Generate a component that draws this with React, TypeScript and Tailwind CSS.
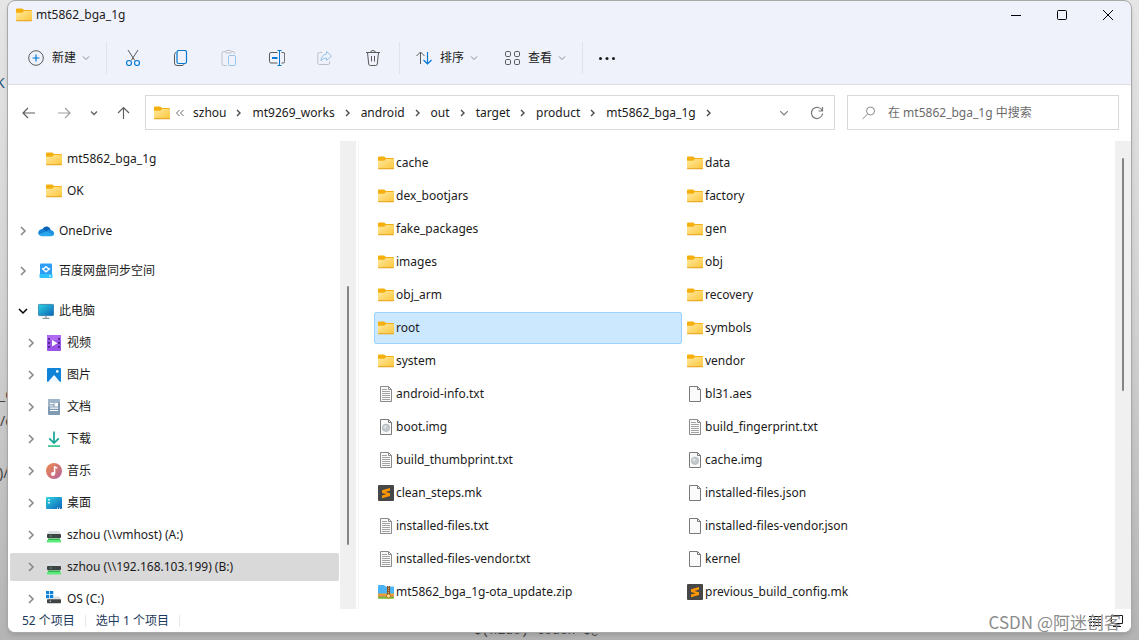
import React from 'react'

type IconProps = { className?: string }

const FolderIcon = ({ className = 'size-4 shrink-0' }: IconProps) => (
  <svg viewBox="0 0 16 16" className={className}>
    <defs>
      <linearGradient id="folder" x1="0" y1="0" x2="1" y2="1">
        <stop offset="0" stopColor="#ffe9a0" />
        <stop offset="1" stopColor="#fcc63a" />
      </linearGradient>
    </defs>
    <path d="M0 2.6Q0 1.5 1 1.5h5.2L8 3h7q1 0 1 1v4H0z" fill="#f5b00f" />
    <path d="M0 5.8h6.2L8 4h8v9.2q0 .8-.8.8H.8q-.8 0-.8-.8z" fill="url(#folder)" />
    <path d="M0 13.2h16q0 1-.8 1H.8q-.8 0-.8-1z" fill="#e5a01c" />
  </svg>
)

const page = 'M2.5.5h8l3 3v12h-11z'

const TextFileIcon = () => (
  <svg viewBox="0 0 16 16" className="size-4 shrink-0">
    <path d={page} fill="#fafafa" stroke="#8a8a8a" />
    <path d="M10.5.5v3h3" fill="none" stroke="#8a8a8a" />
    <path d="M4 3.5h5M4 5.5h8M4 7.5h8M4 9.5h8M4 11.5h8M4 13.5h8" stroke="#a3a3a3" />
  </svg>
)

const BlankFileIcon = () => (
  <svg viewBox="0 0 16 16" className="size-4 shrink-0">
    <path d={page} fill="#fafafa" stroke="#7a7a7a" />
    <path d="M10.5.5v3h3" fill="none" stroke="#7a7a7a" />
  </svg>
)

const DiscFileIcon = () => (
  <svg viewBox="0 0 16 16" className="size-4 shrink-0">
    <path d={page} fill="#fafafa" stroke="#7a7a7a" />
    <path d="M10.5.5v3h3" fill="none" stroke="#7a7a7a" />
    <circle cx="8" cy="8.8" r="3.7" fill="#c3c9cc" stroke="#a4abaf" strokeWidth=".6" />
    <circle cx="7" cy="7.8" r="1.6" fill="#dde2e4" />
  </svg>
)

const SublimeIcon = () => (
  <svg viewBox="0 0 16 16" className="size-4 shrink-0">
    <rect width="16" height="16" rx="1" fill="#474747" />
    <path d="M4 5.3L12 3v2.6L7.5 7 12 8.3v2.6L4 13.2v-2.6l4.6-1.3L4 7.9z" fill="#ff9800" />
  </svg>
)

const ZipIcon = () => (
  <svg viewBox="0 0 16 16" className="size-4 shrink-0">
    <path d="M0 2q0-1 1-1h5l1.5 1.5H15q1 0 1 1V11H0z" fill="#4cb4f5" />
    <path d="M0 9.6h16v2H0z" fill="#f3a51c" />
    <path d="M0 11.6h16v1H0z" fill="#d9342b" />
    <path d="M0 12.4h16V14q0 .8-1 .8H1q-1 0-1-.8z" fill="#7cb62c" />
    <path d="M9 2h3v9H9z" fill="#8a5526" />
    <path d="M10.5 2v9" stroke="#e0b070" strokeDasharray="1 1" />
    <circle cx="10.5" cy="12" r="2" fill="#ffe29a" stroke="#a86a14" strokeWidth=".8" />
  </svg>
)

const CloudIcon = () => (
  <svg viewBox="0 0 16 16" className="size-4 shrink-0">
    <path d="M5 5.2A4.3 4.3 0 0 1 12.7 7L9 11 3 9z" fill="#0a63b5" />
    <path d="M3.3 6.2A3.7 3.7 0 0 0 1 12l7-3.2-2.2-2.2q-1.2-.8-2.5-.4z" fill="#1381d8" />
    <path d="M1 12q1.2 1.3 3 1.3h8.8q2.2 0 3-1.6L8.5 8z" fill="#29a7ec" />
    <path d="M8.3 8.2q2-1.9 4.4-1.3 3.3.7 3.3 3.4 0 1-.6 1.9z" fill="#1c8fdf" />
  </svg>
)

const BaiduIcon = () => (
  <svg viewBox="0 0 16 16" className="size-4 shrink-0">
    <rect x="2" y=".5" width="12" height="12" rx="1" fill="#2d9df5" />
    <path d="M1.5 11h13v3q0 1-1 1h-11q-1 0-1-1z" fill="#2fc3f8" />
    <path d="M5 6.2L8 3.6l3 2.6L8 8.8zM4.2 5.2l1.3 1.3M11.8 5.2l-1.3 1.3" fill="none" stroke="#fff" strokeWidth="1.4" />
    <path d="M11 13h2" stroke="#fff" />
  </svg>
)

const PcIcon = () => (
  <svg viewBox="0 0 16 16" className="size-4 shrink-0">
    <defs>
      <linearGradient id="screen" x1="0" y1="0" x2="1" y2="1">
        <stop offset="0" stopColor="#2fd3e0" />
        <stop offset="1" stopColor="#0b62b8" />
      </linearGradient>
    </defs>
    <rect x=".4" y="1.4" width="15.2" height="11.2" rx=".8" fill="url(#screen)" stroke="#1b6f9c" strokeWidth=".7" />
    <path d="M8 13v2M4.5 15.3h7" stroke="#8e979d" strokeWidth="1.2" />
  </svg>
)

const VideoIcon = () => (
  <svg viewBox="0 0 16 16" className="size-4 shrink-0">
    <rect x="1" y="0" width="14" height="16" rx="1" fill="#9a52e8" />
    <path d="M1 0h14v5H1z" fill="#b06af2" />
    <path d="M3 3v11M13 3v11" stroke="#43207d" strokeWidth="1.8" strokeDasharray="1.8 2.2" />
    <path d="M6 4.8v6.8L11.5 8.2z" fill="#fff" />
  </svg>
)

const PictureIcon = () => (
  <svg viewBox="0 0 16 16" className="size-4 shrink-0">
    <rect x="1" y="1" width="14" height="14" rx="1" fill="#0f83d8" />
    <path d="M2 15l5.6-6.6q.5-.5 1 0L14 15z" fill="#f2f9ff" />
    <circle cx="11.3" cy="4.4" r="1.3" fill="#fff" />
  </svg>
)

const DocumentIcon = () => (
  <svg viewBox="0 0 16 16" className="size-4 shrink-0">
    <rect x="2" y="0" width="12" height="16" rx="1" fill="#7f9ab3" />
    <path d="M2 1q0-1 1-1h10q1 0 1 1v2L2 8z" fill="#9fb5c9" />
    <path d="M4 4.5h3.5M4 7h3.5M4 9.2h8M4 11.5h8" stroke="#fff" strokeWidth="1.2" />
    <rect x="8.5" y="4" width="3.5" height="3.5" fill="#fff" />
  </svg>
)

const DownloadIcon = () => (
  <svg viewBox="0 0 16 16" className="size-4 shrink-0">
    <path d="M8 .5V12M3.2 7.3L8 12l4.8-4.7" fill="none" stroke="#16a796" strokeWidth="1.7" />
    <path d="M2 15.1h12" stroke="#2cc08a" strokeWidth="1.6" />
  </svg>
)

const MusicIcon = () => (
  <svg viewBox="0 0 16 16" className="size-4 shrink-0">
    <defs>
      <linearGradient id="music" x1="0" y1="0" x2="1" y2="1">
        <stop offset="0" stopColor="#f0894a" />
        <stop offset="1" stopColor="#b2619f" />
      </linearGradient>
    </defs>
    <circle cx="8" cy="8" r="8" fill="url(#music)" />
    <path d="M8.6 11V3.8l2.6 1.4" fill="none" stroke="#fff" strokeWidth="1.4" />
    <circle cx="7" cy="11" r="2" fill="#fff" />
  </svg>
)

const DesktopIcon = () => (
  <svg viewBox="0 0 16 16" className="size-4 shrink-0">
    <rect x="0" y="2" width="16" height="12" rx="1" fill="url(#screen)" />
    <path d="M3 4v6" stroke="#fff" strokeWidth="1.6" strokeDasharray="1.6 1.4" />
    <path d="M11 13.2h4" stroke="#fff" strokeDasharray="1 1" />
  </svg>
)

const NetDriveIcon = () => (
  <svg viewBox="0 0 16 16" className="size-4 shrink-0">
    <path d="M3 4h10l2 3H1z" fill="#dcdfe2" />
    <rect x="1" y="7" width="14" height="4" rx=".8" fill="#404346" />
    <path d="M4 9h1.4" stroke="#52e06b" strokeWidth="1.2" />
    <path d="M2 12.2h12" stroke="#2fae4d" strokeWidth="1.6" />
    <path d="M1 14.2h14" stroke="#5cea7a" strokeWidth="2.6" />
  </svg>
)

const OsDriveIcon = () => (
  <svg viewBox="0 0 16 16" className="size-4 shrink-0">
    <path d="M0 0h3.3v3.3H0zM4 0h3.3v3.3H4zM0 4h3.3v3.3H0zM4 4h3.3v3.3H4z" fill="#0f83dc" />
    <path d="M8 5.5h5l2 3H1l.8-1H8z" fill="#dcdfe2" />
    <rect x="1" y="8.2" width="14" height="4" rx=".8" fill="#404346" />
    <path d="M3.5 10.2H5" stroke="#d0e4d4" />
  </svg>
)

const Chevron = ({ className }: IconProps) => (
  <svg viewBox="0 0 10 10" className={className} fill="none" stroke="currentColor" strokeWidth="1.5">
    <path d="M3 1l4 4-4 4" />
  </svg>
)

const ChevronDown = ({ className }: IconProps) => (
  <svg viewBox="0 0 8 8" className={className} fill="none" stroke="currentColor">
    <path d="M1 2.5l3 3 3-3" />
  </svg>
)

const gray = '#5a5a5a'
const blue = '#0078d4'

const tools = [
  {
    label: '剪切',
    icon: (
      <>
        <path d="M3 0l6.8 10.5M13 0L6.2 10.5" stroke={gray} />
        <circle cx="4" cy="13" r="2.5" stroke={blue} strokeWidth="1.2" />
        <circle cx="12" cy="13" r="2.5" stroke={blue} strokeWidth="1.2" />
      </>
    ),
  },
  {
    label: '复制',
    icon: (
      <>
        <path d="M3 2.5q-1.5.5-1.5 2V13q0 2.5 2.5 2.5h5q1.5 0 2-1.3" stroke={gray} />
        <rect x="4" y=".5" width="9.5" height="13" rx="1.8" stroke={blue} strokeWidth="1.2" />
      </>
    ),
  },
  {
    label: '粘贴',
    icon: (
      <>
        <path d="M5 1.5H2.5Q1 1.5 1 3v11q0 1.5 1.5 1.5H6M11 1.5h1q1.5 0 1.5 1.5v1" stroke="#bdbfc4" />
        <rect x="4.5" y=".5" width="6" height="2.5" rx="1.2" stroke="#bdbfc4" />
        <rect x="7.5" y="5.5" width="7" height="10" rx="1.2" stroke="#94c4ec" />
      </>
    ),
  },
  {
    label: '重命名',
    icon: (
      <>
        <path d="M8.5 2.5H2Q.5 2.5 .5 4v7.5Q.5 13 2 13h6.5M12.5 2.5h1.7q1.5 0 1.5 1.5v7.5q0 1.5-1.5 1.5h-1.7" stroke={gray} />
        <path d="M8.5.5h4M8.5 15.5h4M10.5.5v15" stroke={blue} />
        <path d="M3 8h5.5" stroke={blue} strokeWidth="2" />
      </>
    ),
  },
  {
    label: '共享',
    icon: (
      <>
        <path d="M5 2.5H2.5Q.8 2.5 .8 4.2v8.6q0 1.700 1.700 1.700H11q1.700 0 1.700-1.700V11" stroke="#bdbfc4" />
        <path d="M9.5 1.5l5 4.5-5 4.5V8Q6 7.8 4 11 4.3 4.7 9.5 4z" stroke="#94c4ec" />
      </>
    ),
  },
  {
    label: '删除',
    icon: (
      <>
        <path d="M1 2.5h14M5.500 2.500Q5.800.5 8 .5t2.500 2M2.500 2.500l1.200 11.500q.2 1.500 1.600 1.500h5.400q1.400 0 1.600-1.500l1.200-11.500" stroke={gray} />
        <path d="M6.500 6v5.500M9.500 6v5.500" stroke={gray} />
      </>
    ),
  },
]

const crumbs = ['szhou', 'mt9269_works', 'android', 'out', 'target', 'product', 'mt5862_bga_1g']

const thisPc = [
  { name: '视频', Icon: VideoIcon },
  { name: '图片', Icon: PictureIcon },
  { name: '文档', Icon: DocumentIcon },
  { name: '下载', Icon: DownloadIcon },
  { name: '音乐', Icon: MusicIcon },
  { name: '桌面', Icon: DesktopIcon },
  { name: 'szhou (\\\\vmhost) (A:)', Icon: NetDriveIcon },
  { name: 'szhou (\\\\192.168.103.199) (B:)', Icon: NetDriveIcon, active: true },
  { name: 'OS (C:)', Icon: OsDriveIcon },
]

const files = [
  { name: 'cache', Icon: FolderIcon },
  { name: 'dex_bootjars', Icon: FolderIcon },
  { name: 'fake_packages', Icon: FolderIcon },
  { name: 'images', Icon: FolderIcon },
  { name: 'obj_arm', Icon: FolderIcon },
  { name: 'root', Icon: FolderIcon, selected: true },
  { name: 'system', Icon: FolderIcon },
  { name: 'android-info.txt', Icon: TextFileIcon },
  { name: 'boot.img', Icon: DiscFileIcon },
  { name: 'build_thumbprint.txt', Icon: TextFileIcon },
  { name: 'clean_steps.mk', Icon: SublimeIcon },
  { name: 'installed-files.txt', Icon: TextFileIcon },
  { name: 'installed-files-vendor.txt', Icon: TextFileIcon },
  { name: 'mt5862_bga_1g-ota_update.zip', Icon: ZipIcon },
  { name: 'data', Icon: FolderIcon },
  { name: 'factory', Icon: FolderIcon },
  { name: 'gen', Icon: FolderIcon },
  { name: 'obj', Icon: FolderIcon },
  { name: 'recovery', Icon: FolderIcon },
  { name: 'symbols', Icon: FolderIcon },
  { name: 'vendor', Icon: FolderIcon },
  { name: 'bl31.aes', Icon: BlankFileIcon },
  { name: 'build_fingerprint.txt', Icon: TextFileIcon },
  { name: 'cache.img', Icon: DiscFileIcon },
  { name: 'installed-files.json', Icon: BlankFileIcon },
  { name: 'installed-files-vendor.json', Icon: BlankFileIcon },
  { name: 'kernel', Icon: BlankFileIcon },
  { name: 'previous_build_config.mk', Icon: SublimeIcon },
]

const Divider = () => <div className="mx-4 h-8 w-px bg-[#e0e3ea]" />

const TitleBar = () => (
  <header className="flex h-7 shrink-0 items-center justify-between pl-2">
    <h1 className="flex items-center gap-1">
      <FolderIcon />
      mt5862_bga_1g
    </h1>
    <div className="flex text-black">
      <button aria-label="最小化" className="flex h-7 w-[46px] items-center justify-center">
        <svg viewBox="0 0 10 10" className="size-2.5" stroke="currentColor"><path d="M0 5.5h10" /></svg>
      </button>
      <button aria-label="最大化" className="flex h-7 w-[46px] items-center justify-center">
        <svg viewBox="0 0 10 10" className="size-2.5" fill="none" stroke="currentColor"><rect x=".5" y=".5" width="9" height="9" rx="1" /></svg>
      </button>
      <button aria-label="关闭" className="flex h-7 w-[46px] items-center justify-center">
        <svg viewBox="0 0 10 10" className="size-2.5" stroke="currentColor"><path d="M0 0l10 10M10 0L0 10" /></svg>
      </button>
    </div>
  </header>
)

const Toolbar = () => (
  <div className="flex shrink-0 items-center border-b border-[#dadde3] pt-[13px] pb-2.5 pl-5">
    <button className="flex items-center gap-2">
      <svg viewBox="0 0 16 16" className="size-4" fill="none">
        <circle cx="8" cy="8" r="7.3" stroke={gray} />
        <path d="M8 4.5v7M4.5 8h7" stroke={blue} strokeWidth="1.2" />
      </svg>
      新建
      <ChevronDown className="-ml-0.5 size-2 text-[#8a8a8a]" />
    </button>
    <Divider />
    <div className="flex gap-8 px-0.5">
      {tools.map((t) => (
        <button key={t.label} aria-label={t.label}>
          <svg viewBox="0 0 16 16" className="size-4" fill="none">{t.icon}</svg>
        </button>
      ))}
    </div>
    <Divider />
    <button className="flex items-center gap-2">
      <svg viewBox="0 0 16 16" className="size-4" fill="none">
        <path d="M4.5 14V2M.5 6l4-4 4 4" stroke={gray} />
        <path d="M11.5 2v12M7.5 10l4 4 4-4" stroke={blue} strokeWidth="1.2" />
      </svg>
      排序
      <ChevronDown className="-ml-0.5 size-2 text-[#8a8a8a]" />
    </button>
    <button className="ml-[26px] flex items-center gap-2">
      <svg viewBox="0 0 16 16" className="size-4" fill="none" stroke={gray}>
        <rect x="1.5" y="1.5" width="5" height="5" rx="1.3" />
        <rect x="10.5" y="1.5" width="5" height="5" rx="1.3" />
        <rect x="1.5" y="9.5" width="5" height="5" rx="1.3" />
        <rect x="10.5" y="9.5" width="5" height="5" rx="1.3" />
      </svg>
      查看
      <ChevronDown className="-ml-0.5 size-2 text-[#8a8a8a]" />
    </button>
    <Divider />
    <button aria-label="更多">
      <svg viewBox="0 0 16 16" className="size-4" fill="#1b1b1b">
        <circle cx="1.500" cy="8.500" r="1.500" />
        <circle cx="8" cy="8.500" r="1.500" />
        <circle cx="14.500" cy="8.500" r="1.500" />
      </svg>
    </button>
  </div>
)

const AddressBar = () => (
  <div className="flex shrink-0 items-center bg-white pt-2.5 pr-3 pb-[11px] pl-3.5">
    <div className="mr-[13px] flex items-center gap-[18px] text-[#5f5f5f]">
      <button aria-label="后退">
        <svg viewBox="0 0 16 16" className="size-4" fill="none" stroke="currentColor" strokeWidth="1.2"><path d="M13 8H1M6 3L1 8l5 5" /></svg>
      </button>
      <button aria-label="前进" className="text-[#a0a0a0]">
        <svg viewBox="0 0 16 16" className="size-4" fill="none" stroke="currentColor" strokeWidth="1.2"><path d="M2 8h12M9 3l5 5-5 5" /></svg>
      </button>
      <button aria-label="最近位置">
        <svg viewBox="0 0 8 8" className="size-2" fill="none" stroke="currentColor" strokeWidth="1.3"><path d="M1 2.500l3 3 3-3" /></svg>
      </button>
      <button aria-label="上移">
        <svg viewBox="0 0 16 16" className="size-4" fill="none" stroke="currentColor" strokeWidth="1.2"><path d="M7.500 14V2.500M2 8l5.500-5.500L13 8" /></svg>
      </button>
    </div>
    <nav aria-label="地址" className="flex h-[35px] min-w-0 flex-1 items-center border border-[#d9d9d9] pr-[9px] pl-2">
      <FolderIcon />
      <svg viewBox="0 0 8 8" className="mr-[9px] ml-1.5 size-2" fill="none" stroke="#6a6a6a"><path d="M3.500 1l-3 3 3 3M7.500 1l-3 3 3 3" /></svg>
      {crumbs.map((c) => (
        <React.Fragment key={c}>
          <button>{c}</button>
          <span className="flex w-[26px] justify-center text-[#4a4a4a]">
            <svg viewBox="0 0 8 8" className="size-2" fill="none" stroke="currentColor" strokeWidth="1.4"><path d="M2 1l3 3-3 3" /></svg>
          </span>
        </React.Fragment>
      ))}
      <button aria-label="历史记录" className="ml-auto"><ChevronDown className="size-2.5 text-[#7a7a7a]" /></button>
      <button aria-label="刷新" className="ml-5">
        <svg viewBox="0 0 16 16" className="size-4" fill="none" stroke="#7a7a7a" strokeWidth="1.2">
          <path d="M13.3 6A5.600 5.600 0 1 0 13.600 8.500M13.500 2v4H9.500" />
        </svg>
      </button>
    </nav>
    <label className="ml-3 flex h-[35px] w-[272px] items-center border border-[#d9d9d9] pl-3.5">
      <svg viewBox="0 0 14 14" className="size-3.5 shrink-0" fill="none" stroke="#8a8a8a">
        <circle cx="8.500" cy="5" r="4" />
        <path d="M5.600 8L.5 13" />
      </svg>
      <input
        type="text"
        aria-label="搜索"
        placeholder="在 mt5862_bga_1g 中搜索"
        className="ml-3 min-w-0 flex-1 bg-transparent outline-none placeholder:text-[#6b6b6b]"
      />
    </label>
  </div>
)

const Sidebar = () => (
  <aside className="w-[332px] shrink-0 overflow-hidden pt-0.5">
    {['mt5862_bga_1g', 'OK'].map((name) => (
      <a key={name} href="#" className="flex h-8 items-center gap-[5px] pl-[38px]">
        <FolderIcon />
        {name}
      </a>
    ))}
    <a href="#" className="mt-2 flex h-8 items-center pl-2.5">
      <Chevron className="mr-2.5 size-2.5 text-[#858585]" />
      <CloudIcon />
      <span className="ml-[5px]">OneDrive</span>
    </a>
    <a href="#" className="mt-2 flex h-8 items-center pl-2.5">
      <Chevron className="mr-2.5 size-2.5 text-[#858585]" />
      <BaiduIcon />
      <span className="ml-[5px]">百度网盘同步空间</span>
    </a>
    <a href="#" className="mt-2 flex h-8 items-center pl-2.5">
      <Chevron className="mr-2.5 size-2.5 rotate-90 text-black" />
      <PcIcon />
      <span className="ml-[5px]">此电脑</span>
    </a>
    <div className="flex flex-col gap-1 py-0.5 pr-px pl-0.5">
      {thisPc.map(({ name, Icon, active }) => (
        <a key={name} href="#" className={`flex h-7 items-center rounded-xs pl-4 ${active ? 'bg-[#d9d9d9]' : ''}`}>
          <Chevron className="mr-2.5 size-2.5 text-[#858585]" />
          <Icon />
          <span className="ml-[5px]">{name}</span>
        </a>
      ))}
    </div>
  </aside>
)

const FileList = () => (
  <main className="min-w-0 flex-1 overflow-hidden pt-1.5 pl-[15px]">
    <div className="grid w-[617px] grid-flow-col grid-cols-2 grid-rows-14 gap-px">
      {files.map(({ name, Icon, selected }) => (
        <button
          key={name}
          className={`flex h-8 items-center gap-0.5 border px-[3px] ${selected ? 'rounded-xs border-[#99d1ff] bg-[#cce8ff]' : 'border-transparent'}`}
        >
          <Icon />
          {name}
        </button>
      ))}
    </div>
  </main>
)

const StatusBar = () => (
  <footer className="flex flex-1 items-center text-[#1e395b]">
    <span className="pl-3.5">52 个项目</span>
    <span className="mx-2.5 h-3 w-px bg-[#e8e8e8]" />
    <span>选中 1 个项目</span>
    <span className="mx-2.5 h-3 w-px bg-[#e8e8e8]" />
    <div className="mr-2 ml-auto flex gap-2.5">
      <button aria-label="详细信息">
        <svg viewBox="0 0 12 12" className="size-3" stroke="#1b1b1b"><path d="M0 1.500h3M4 1.500h8M0 4.500h3M4 4.500h8M0 7.500h3M4 7.500h8M0 10.500h3M4 10.500h8" /></svg>
      </button>
      <button aria-label="大图标">
        <svg viewBox="0 0 12 12" className="size-3" fill="none" stroke="#1b1b1b"><path d="M.5.5h11v8H.5zM2 11.500h8" /></svg>
      </button>
    </div>
  </footer>
)

export default function App() {
  return (
    <div className="relative isolate flex h-screen flex-col overflow-hidden bg-linear-to-b from-[#e6e6e6] via-[#d2d2d2] to-[#b4b4b4] font-['Noto_Sans','Noto_Sans_CJK_SC',sans-serif] text-xs text-[#1b1b1b]">
      {/* editor window showing through behind the explorer */}
      <div className="absolute inset-0 -z-10 text-sm text-[#444]">
        <span className="absolute top-[73px] -left-1 text-[#1f4e79]">K</span>
        <span className="absolute top-[385px] -left-px">_C</span>
        <span className="absolute top-[411px] left-0">/c</span>
        <span className="absolute top-[463px] -left-px">)/</span>
        <span className="absolute top-[622px] left-[474px] font-['Liberation_Mono',monospace] text-[13px]">$(hide) touch $@</span>
      </div>
      <div className="mx-[7px] mb-[7px] flex min-h-0 flex-1 flex-col overflow-hidden rounded-lg border border-[#a8a8a8] bg-[#eff2fa] shadow-md">
        <TitleBar />
        <Toolbar />
        <AddressBar />
        <div className="flex h-[468px] shrink-0 bg-white">
          <Sidebar />
          <div className="w-4 shrink-0 bg-[#f0f0f0] pt-[145px] pl-[7px]">
            <div className="h-[259px] w-0.5 rounded-full bg-[#858585]" />
          </div>
          <div className="ml-0.5 w-px shrink-0 bg-[#f5f5f5]" />
          <FileList />
          <div className="w-4 shrink-0 bg-[#f0f0f0] pt-[17px] pl-[7px]">
            <div className="h-[233px] w-0.5 rounded-full bg-[#858585]" />
          </div>
        </div>
        <div className="flex min-h-0 flex-1 bg-white">
          <StatusBar />
        </div>
      </div>
      <p className="absolute right-[18px] bottom-1.5 font-['Noto_Sans_CJK_SC',sans-serif] text-[17px] leading-6 text-[#8c8c8c]">CSDN @阿迷创客</p>
    </div>
  )
}
